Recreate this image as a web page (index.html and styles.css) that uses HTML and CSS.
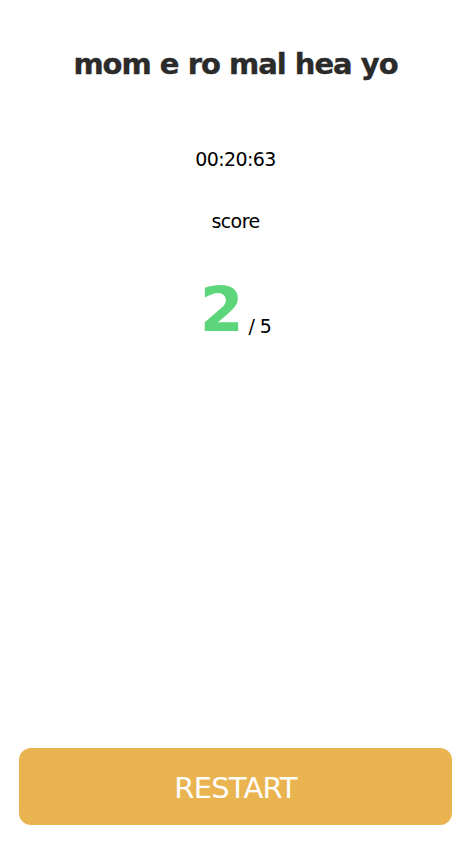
FILE: index.html
```html
<!DOCTYPE html>
<html>
<head>
<meta charset="utf-8">
<link rel="stylesheet" href="styles.css">
</head>
<body>
<div class="page">
  <h1 class="title">mom e ro mal hea yo</h1>
  <div class="timer">00:20:63</div>
  <div class="label">score</div>
  <div class="score"><span class="num">2</span><span class="total">/ 5</span></div>
  <div class="spacer"></div>
  <button class="restart">RESTART</button>
</div>
</body>
</html>
```

FILE: styles.css
```css
html, body {
  margin: 0;
  padding: 0;
  background: #ffffff;
}
.page {
  width: 474px;
  height: 847px;
  display: flex;
  flex-direction: column;
  align-items: center;
  font-family: "DejaVu Sans", Verdana, sans-serif;
  color: #000;
  box-sizing: border-box;
  padding: 0 22px 22px 19px;
}
.title {
  margin: 46px 0 0 0;
  font-size: 29px;
  line-height: 36px;
  font-weight: bold;
  color: #2b2b2b;
  letter-spacing: -1px;
  -webkit-text-stroke: 0.4px #2b2b2b;
}
.timer {
  margin-top: 65px;
  font-size: 19px;
  line-height: 24px;
  letter-spacing: -0.6px;
}
.label {
  margin-top: 38px;
  font-size: 19px;
  line-height: 24px;
  letter-spacing: -0.6px;
}
.score {
  margin-top: 42px;
  line-height: 70px;
  height: 70px;
}
.num {
  font-size: 63px;
  font-weight: bold;
  color: #5dd67b;
  margin-right: 5px;
}
.total {
  font-size: 19px;
  letter-spacing: -0.6px;
  vertical-align: -2px;
}
.spacer {
  flex: 1;
}
.restart {
  width: 433px;
  height: 77px;
  border: none;
  border-radius: 12px;
  background: #e9b450;
  color: #ffffff;
  font-family: "DejaVu Sans", Verdana, sans-serif;
  font-size: 29px;
  letter-spacing: -0.8px;
  padding: 3px 0 0 0;
}
```
